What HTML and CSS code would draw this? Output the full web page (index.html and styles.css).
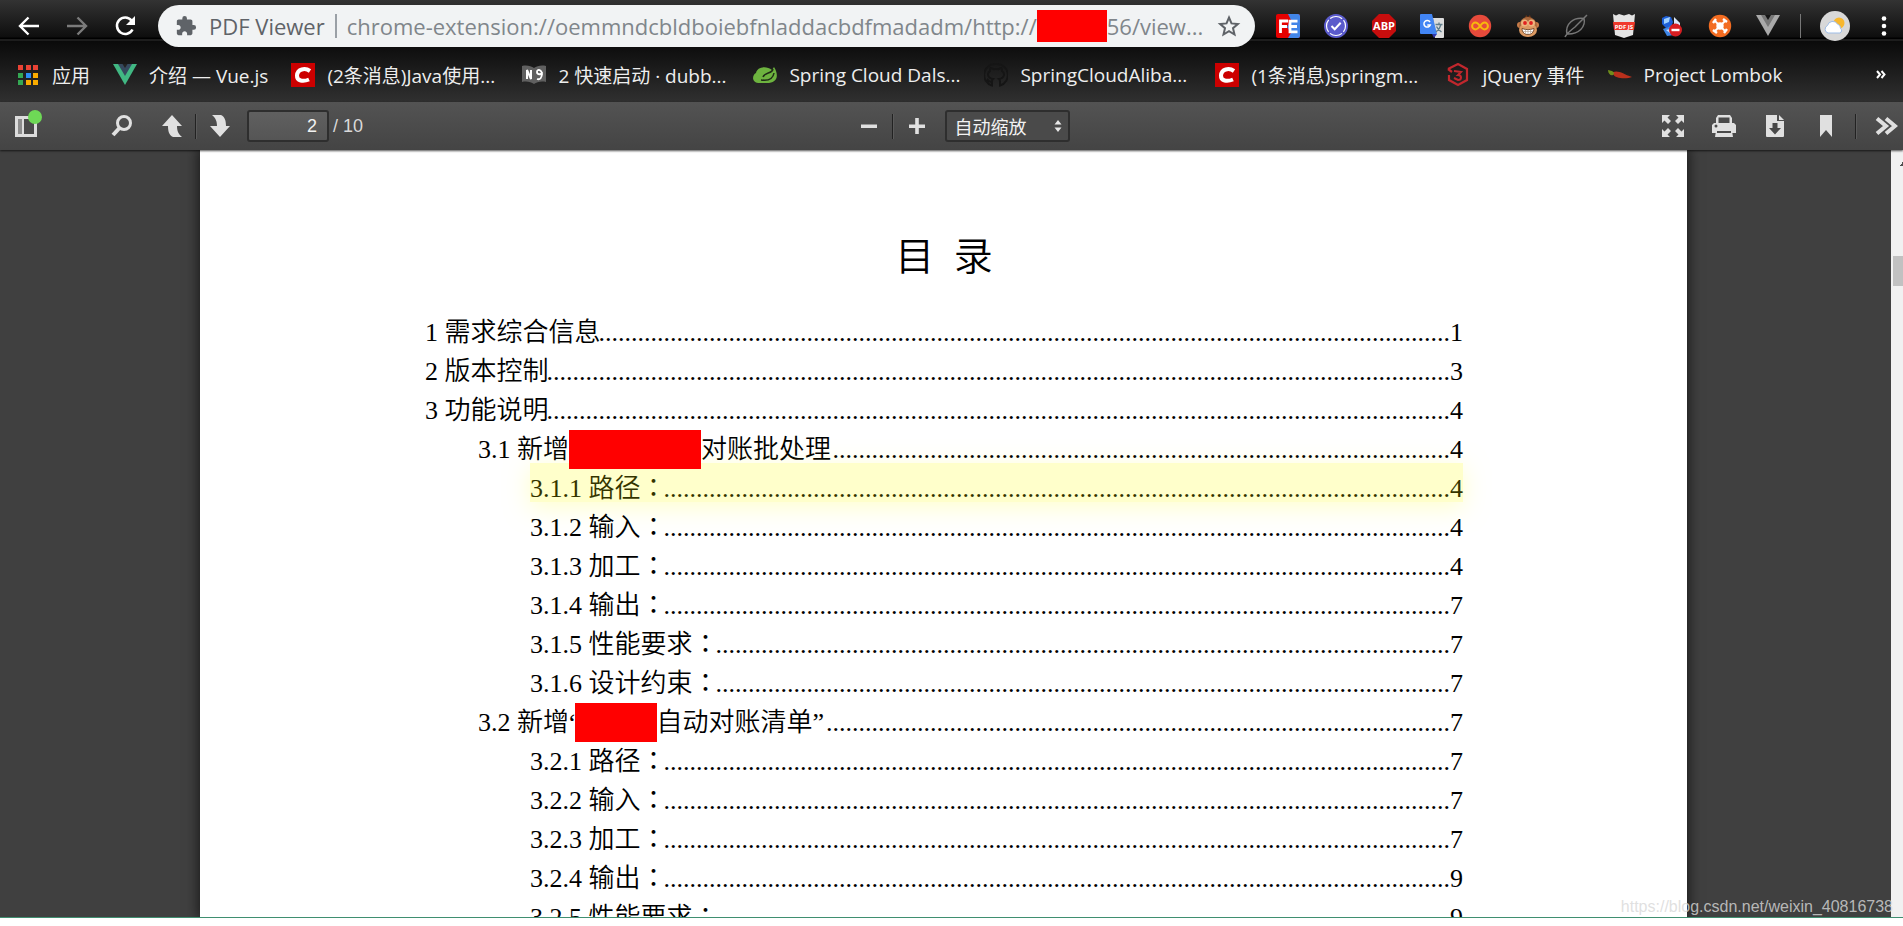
FILE: index.html
```html
<!DOCTYPE html>
<html lang="zh-CN">
<head>
<meta charset="utf-8">
<title>PDF Viewer</title>
<link rel="stylesheet" href="styles.css">
</head>
<body>
<header class="chrome-bar">
  <nav class="nav-buttons" aria-label="导航">
    <button class="icon-button" aria-label="后退"><svg width="24" height="24" viewBox="0 0 24 24" fill="none" stroke="#fff" stroke-width="2.4"><path d="M22 12H4M11.500 3.500L3 12l8.500 8.500"/></svg></button>
    <button class="icon-button" aria-label="前进"><svg width="24" height="24" viewBox="0 0 24 24" fill="none" stroke="#7b7b7b" stroke-width="2.400"><path d="M2 12h18M12.500 3.500L21 12l-8.500 8.500"/></svg></button>
    <button class="icon-button" aria-label="重新加载"><svg width="24" height="24" viewBox="0 0 24 24" fill="none" stroke="#fff" stroke-width="2.600"><path d="M19.500 15.500A8.200 8.200 0 1 1 18.500 6.500"/><path fill="#fff" stroke="none" d="M22 2v9h-9z"/></svg></button>
  </nav>
  <div class="address">
    <svg width="22" height="22" viewBox="0 0 24 24" fill="#5f6368"><path d="M20.500 11H19V7c0-1.100-.9-2-2-2h-4V3.500a2.500 2.500 0 0 0-5 0V5H4c-1.100 0-2 .9-2 2v3.800h1.500c1.500 0 2.700 1.200 2.700 2.700S5 16.200 3.500 16.200H2V20c0 1.100.9 2 2 2h3.800v-1.500c0-1.500 1.200-2.700 2.700-2.700s2.700 1.200 2.700 2.700V22H17c1.100 0 2-.9 2-2v-4h1.500a2.500 2.500 0 0 0 0-5z"/></svg>
    <span class="site-name">PDF Viewer</span>
    <span class="address-rule"></span>
    <span class="url">chrome-extension://oemmndcbldboiebfnladdacbdfmadadm/http://<i class="redact redact-url"></i>56/view...</span>
    <button class="icon-button star" aria-label="收藏"><svg width="24" height="24" viewBox="0 0 24 24" fill="none" stroke="#5f6368" stroke-width="2"><path d="M12 3.500l2.500 5.900 6.400.6-4.900 4.200 1.500 6.300-5.500-3.400-5.500 3.400L8 14.200 3.100 10l6.400-.6z"/></svg></button>
  </div>
  <div class="extensions">
    <svg viewBox="0 0 24 24"><rect width="24" height="24" rx="2" fill="#e60000"/><path d="M12 0h10a2 2 0 0 1 2 2v20a2 2 0 0 1-2 2H12l3-5-4-6 4-7z" fill="#4285e8"/><path d="M4.500 19V7H12M4.500 12.500H11M21.500 7.200H14v10.600h7.500M14 12.500h7" fill="none" stroke="#fff" stroke-width="2.800"/></svg>
    <svg viewBox="0 0 24 24"><circle cx="12" cy="12" r="12" fill="#5a5acb"/><circle cx="12" cy="12" r="9.500" fill="none" stroke="#fff" stroke-width="1.200" stroke-dasharray="12.900 2" stroke-dashoffset="6.500"/><path d="M7.500 12l3.200 3.200 6-6.400" fill="none" stroke="#fff" stroke-width="2"/></svg>
    <svg viewBox="0 0 24 24"><path d="M7 0h10l7 7v10l-7 7H7l-7-7V7z" fill="#c70d0d"/><text x="12" y="16" class="abp">ABP</text></svg>
    <svg viewBox="0 0 24 24"><path d="M13 4h10a1 1 0 0 1 1 1v18a1 1 0 0 1-1 1h-8z" fill="#dcdcdc"/><path d="M12 20h5l-3 4z" fill="#3038b0"/><path d="M1 0h11l5 20H1a1 1 0 0 1-1-1V1a1 1 0 0 1 1-1z" fill="#4285f4"/><path d="M10 8A3.300 3.300 0 1 0 10.300 11H7.300" fill="none" stroke="#fff" stroke-width="1.500"/><path d="M15.500 10.500h7M19 8.500v2M21 10.500c-1 4-3 6-5 7.500M16.500 12.500c1 2.500 3 4 5 5.500" fill="none" stroke="#607d8b" stroke-width="1.300"/></svg>
    <svg viewBox="0 0 24 24"><circle cx="12" cy="12" r="11.200" fill="#e64a3b"/><path d="M12 12c-1.500-2-2.700-3.400-4.500-3.400a3.400 3.400 0 0 0 0 6.800c1.800 0 3-1.400 4.500-3.400s2.700-3.400 4.500-3.400a3.400 3.400 0 0 1 0 6.800c-1.800 0-3-1.400-4.500-3.400z" fill="none" stroke="#f8b90c" stroke-width="2"/></svg>
    <svg viewBox="0 0 24 24"><path d="M9 4l1-3 2 2 2-2 1 3z" fill="#6b3517"/><circle cx="4" cy="11" r="3" fill="#c77b48"/><circle cx="20" cy="11" r="3" fill="#c77b48"/><circle cx="12" cy="12" r="9" fill="#a9683c"/><ellipse cx="12" cy="16" rx="9" ry="7" fill="#dc9a63"/><circle cx="8.500" cy="9" r="3.500" fill="#edb57e"/><circle cx="15.500" cy="9" r="3.500" fill="#edb57e"/><circle cx="9" cy="9" r="1.900" fill="#e02020"/><circle cx="15" cy="9" r="1.900" fill="#e02020"/><path d="M6 14.500c4 1.500 8 1.500 12 0 0 3.500-2.500 6-6 6s-6-2.500-6-6z" fill="#fff" stroke="#603010" stroke-width=".8"/><path d="M7 17.500h10M9.500 15.500v4.500M12 15.500v5M14.500 15.500v4.500" stroke="#b9a89a" stroke-width=".7"/></svg>
    <svg viewBox="0 0 24 24" fill="none" stroke="#777" stroke-width="1.500"><path d="M1 23C3 19 7 16 11 13L23 1M3 20C1 10 9 3 20 4.500c2 8-5 16-17 15.500z"/></svg>
    <svg viewBox="0 0 24 24"><path d="M1 0l3 1.500L7 0l5 1.500L17 0l3 1.500L23 0l-2 21-9 3-9-3z" fill="#e3e3e3"/><path d="M1 8h22l-1 8H2z" fill="#f0382b"/><text x="12" y="15" class="pdfjs">PDF JS</text></svg>
    <svg viewBox="0 0 24 24"><path d="M2 4l4-2 5 1 2 5-2 5-5 1-4-4z" fill="#1d5fd8"/><path d="M4 5l6-2-1 5-5 2z" fill="#9fd0ff"/><path d="M14 3l6 6v4l-6-2z" fill="#d7e8fa"/><path d="M3 15l8-3 3 9-7 1z" fill="#3f87e8"/><path d="M6 16l4-1v4z" fill="#bfe0ff"/><circle cx="15.500" cy="16" r="6.500" fill="#d81e22"/><path d="M11.500 16h8" stroke="#fff" stroke-width="2.400"/></svg>
    <svg viewBox="0 0 24 24"><circle cx="12" cy="12" r="11.200" fill="#f36c21"/><circle cx="12" cy="12" r="3.700" fill="#fff"/><path d="M7 7l10 10M17 7L7 17" stroke="#fff" stroke-width="1.800"/><path d="M5 9l3-4M15 5l4 3M19 15l-3 4M9 19l-4-3" stroke="#fff" stroke-width="2.400"/></svg>
    <svg viewBox="0 0 24 24"><path d="M0 1h24L12 22z" fill="#a9a9a9"/><path d="M5 1h5l2 4 2-4h5l-7 12z" fill="#777"/><path d="M9 1h6l-3 5z" fill="#151515"/></svg>
  </div>
  <span class="chrome-rule"></span>
  <button class="avatar" aria-label="用户"><svg width="30" height="30" viewBox="0 0 30 30"><circle cx="15" cy="15" r="15" fill="#d8d8d8"/><circle cx="19" cy="12" r="5.500" fill="#f8b72d"/><path d="M8 22a4 4 0 0 1-.5-7.500 5.500 5.500 0 0 1 10-1.500 4.500 4.500 0 0 1 3 4.500A2.600 2.600 0 0 1 20 22z" fill="#fff" stroke="#9dbce6"/></svg></button>
  <button class="icon-button menu" aria-label="菜单"><svg width="6" height="22" viewBox="0 0 6 22" fill="#fff"><circle cx="3" cy="3.500" r="2.300"/><circle cx="3" cy="11" r="2.300"/><circle cx="3" cy="18.500" r="2.300"/></svg></button>
</header>

<nav class="bookmarks" aria-label="书签">
  <a class="bookmark" href="#"><svg width="24" height="24" viewBox="0 0 24 24"><path d="M2 2h5v5H2zM10 2h5v5h-5zM17 2h5v5h-5z" fill="#ea4335"/><path d="M2 10h5v5H2zM2 17h5v5H2z" fill="#34a853"/><path d="M10 10h5v5h-5z" fill="#2b8df5"/><path d="M17 10h5v5h-5zM10 17h5v5h-5zM17 17h5v5h-5z" fill="#f9ab00"/></svg><span>应用</span></a>
  <a class="bookmark" href="#"><svg width="24" height="24" viewBox="0 0 24 24"><path d="M0 1h24L12 22z" fill="#41b883"/><path d="M5 1h14l-7 12z" fill="#35495e"/><path d="M9.500 1h5L12 5z" fill="#222"/></svg><span>介绍 — Vue.js</span></a>
  <a class="bookmark clipped" href="#"><svg width="24" height="24" viewBox="0 0 24 24"><path fill="#c00" d="M0 0h24v24H0z"/><path d="M19 8C14 4.500 6.500 6 6 12.500c-.3 5.500 6 6.500 12 4" fill="none" stroke="#fff" stroke-width="4"/></svg><span>(2条消息)Java使用...</span></a>
  <a class="bookmark clipped" href="#"><svg width="24" height="24" viewBox="0 0 24 24"><path d="M0 3c5-1 9 0 12 2 3-2 7-3 12-2v16c-5-1-9 0-12 2-3-2-7-3-12-2z" fill="#606060"/><path d="M5 16V7l4 9V7" fill="none" stroke="#fff" stroke-width="2"/><path d="M20 12c0-6-5-6-5-3s5 3 5 0M20 10c0 5-2 7-5 6" fill="none" stroke="#fff" stroke-width="1.800"/></svg><span>2 快速启动 · dubb...</span></a>
  <a class="bookmark clipped" href="#"><svg width="24" height="24" viewBox="0 0 24 24"><path d="M21 4c6 10 2 16-7 16H7C-2 20-1 12 3 10c1-6 10-8 16-3z" fill="#6db33f"/><path d="M20 6c-1 5-8 3-10 8M8 17c7 1 12-1 13-7" fill="none" stroke="#1f2b17" stroke-width="1.500"/></svg><span>Spring Cloud Dals...</span></a>
  <a class="bookmark clipped" href="#"><svg width="24" height="24" viewBox="0 0 24 24"><path d="M12 1a11 11 0 0 0-4 21.500v-4c-4 1-4-2-5-2.500M12 1a11 11 0 0 1 4 21.500v-4c0-1-.3-2-1-2.500 6-1 6-6 3-8 0-1 0-2-.5-3-1 0-2 .5-3 1.200-2-.4-3-.4-5 0-1-.7-2-1.200-3-1.200C6 6 6 7 6 8c-3 2-3 7 3 8-.7.5-1 1.500-1 2.500" fill="none" stroke="#151515" stroke-width="2"/></svg><span>SpringCloudAliba...</span></a>
  <a class="bookmark clipped" href="#"><svg width="24" height="24" viewBox="0 0 24 24"><path fill="#c00" d="M0 0h24v24H0z"/><path d="M19 8C14 4.500 6.500 6 6 12.500c-.3 5.500 6 6.500 12 4" fill="none" stroke="#fff" stroke-width="4"/></svg><span>(1条消息)springm...</span></a>
  <a class="bookmark" href="#"><svg width="24" height="24" viewBox="0 0 24 24" fill="none" stroke="#c1272d" stroke-width="2.200"><path d="M2 6l4 3M2 6l10-5 9 5v11l-9 5-9-5v-5"/><path d="M8 8l7 1-3 3c4 0 4 5 0 5l-4-2" stroke-width="2"/></svg><span>jQuery 事件</span></a>
  <a class="bookmark" href="#"><svg width="24" height="24" viewBox="0 0 24 24"><path d="M5 9c6-2 10 2 19 5-5 2-17 2-19-3z" fill="#b9301c"/><path d="M0 7c0 4 3 6 5 5 2-1 1-3-1-4-2 0-2-1-4-1z" fill="#6f8d1b"/></svg><span>Project Lombok</span></a>
  <button class="icon-button overflow" aria-label="更多书签"><svg width="10" height="12" viewBox="0 0 10 12" fill="none" stroke="#fff" stroke-width="2"><path d="M1 2l3 3.500L1 9M5.500 2l3 3.500-3 3.500"/></svg></button>
</nav>

<div class="toolbar">
  <div class="tools tools-left">
    <button class="tool" aria-label="切换侧栏"><svg width="24" height="24" viewBox="0 0 24 24"><path d="M1 2h22v21H1z" fill="#dcdcdc"/><path d="M4 5h4v15H4z" fill="#8c8c8c"/><path d="M10 5h10v15H10z" fill="#4a4a4a"/></svg><span class="dot"></span></button>
    <button class="tool find" aria-label="查找"><svg width="24" height="24" viewBox="0 0 24 24" fill="none" stroke="#e0e0e0"><circle cx="14" cy="9" r="6.500" stroke-width="3"/><path d="M9.500 14L3 21" stroke-width="4"/></svg></button>
    <button class="tool page-step" aria-label="上一页"><svg width="24" height="24" viewBox="0 0 24 24" fill="#e0e0e0"><path d="M12 1l10 11h-5c0 4 1 8 5 11h-9c-4-2-5-6-5-11H2z"/></svg></button>
    <span class="rule"></span>
    <button class="tool" aria-label="下一页"><svg width="24" height="24" viewBox="0 0 24 24" fill="#e0e0e0"><path d="M12 23l10-11h-4c0-5-1-9-5-11H4c4 3 5 7 5 11H2z"/></svg></button>
    <label class="page-label"><input class="page-input" type="text" value="2" aria-label="页码"><span>/ 10</span></label>
  </div>
  <div class="tools tools-center">
    <button class="tool" aria-label="缩小"><svg width="24" height="24" viewBox="0 0 24 24"><path d="M4 10.500h16v3.500H4z" fill="#e0e0e0"/></svg></button>
    <span class="rule"></span>
    <button class="tool" aria-label="放大"><svg width="24" height="24" viewBox="0 0 24 24"><path d="M4 10.500h6.200V4h3.600v6.500H20v3.500h-6.200v6h-3.600v-6H4z" fill="#e0e0e0"/></svg></button>
    <div class="zoom">
      <select class="zoom-select" aria-label="缩放"><option>自动缩放</option></select>
      <svg class="zoom-arrows" width="8" height="14" viewBox="0 0 8 14" fill="#e8e8e8"><path d="M4 1l3.500 4.500h-7zM4 13L.5 8.500h7z"/></svg>
    </div>
  </div>
  <div class="tools tools-right">
    <button class="tool" aria-label="演示模式"><svg width="24" height="24" viewBox="0 0 24 24" fill="#e0e0e0"><path d="M1 1h8L6.500 3.500l3.500 3.500-3 3L3.500 6.500 1 9zM23 1v8l-2.500-2.500L17 10l-3-3 3.500-3.500L15 1zM1 23v-8l2.500 2.500L7 14l3 3-3.500 3.500L9 23zM23 23h-8l2.500-2.500L14 17l3-3 3.500 3.500L23 15z"/></svg></button>
    <button class="tool" aria-label="打印"><svg width="24" height="24" viewBox="0 0 24 24"><path d="M6 1h12l2 3v6H4V4z" fill="#e0e0e0"/><path d="M6.500 3.500h11V9h-11z" fill="#4a4a4a"/><path d="M2 9h20l2 2v8H0v-8z" fill="#e0e0e0"/><circle cx="4" cy="12" r="1.500" fill="#4a4a4a"/><path d="M4 17h16l1 6H3z" fill="#e0e0e0"/><path d="M5 17h14v2H5z" fill="#4a4a4a"/></svg></button>
    <button class="tool" aria-label="下载"><svg width="24" height="24" viewBox="0 0 24 24"><path d="M3 1h11v6h7v15a1 1 0 0 1-1 1H4a1 1 0 0 1-1-1z" fill="#e0e0e0"/><path d="M16 1l5 5h-5z" fill="#e0e0e0"/><path d="M9.500 9h5v5H18l-6 6.500L6 14h3.500z" fill="#484848"/></svg></button>
    <button class="tool" aria-label="当前视图"><svg width="24" height="24" viewBox="0 0 24 24"><path d="M6 1h12v22l-6-7-6 7z" fill="#e0e0e0"/></svg></button>
    <span class="rule"></span>
    <button class="tool" aria-label="工具"><svg width="24" height="24" viewBox="0 0 24 24" fill="none" stroke="#e0e0e0" stroke-width="4"><path d="M3 4.500l9 7.500-9 7.500M12 4.500l9 7.500-9 7.500"/></svg></button>
  </div>
</div>

<main class="viewer">
  <article class="page">
    <h1 class="page-title">目  录</h1>
    <nav class="toc" aria-label="目录">
      <a class="entry" href="#"><span>1 需求综合信息</span><span class="leader"></span><span>1</span></a>
      <a class="entry" href="#"><span>2 版本控制</span><span class="leader"></span><span>3</span></a>
      <a class="entry" href="#"><span>3 功能说明</span><span class="leader"></span><span>4</span></a>
      <a class="entry level-2" href="#"><span>3.1 新增<i class="redact redact-wide"></i>对账批处理</span><span class="leader"></span><span>4</span></a>
      <a class="entry level-3 hovered" href="#"><span>3.1.1 路径<span class="colon" lang="zh-TW">：</span></span><span class="leader"></span><span>4</span></a>
      <a class="entry level-3" href="#"><span>3.1.2 输入<span class="colon" lang="zh-TW">：</span></span><span class="leader"></span><span>4</span></a>
      <a class="entry level-3" href="#"><span>3.1.3 加工<span class="colon" lang="zh-TW">：</span></span><span class="leader"></span><span>4</span></a>
      <a class="entry level-3" href="#"><span>3.1.4 输出<span class="colon" lang="zh-TW">：</span></span><span class="leader"></span><span>7</span></a>
      <a class="entry level-3" href="#"><span>3.1.5 性能要求<span class="colon" lang="zh-TW">：</span></span><span class="leader"></span><span>7</span></a>
      <a class="entry level-3" href="#"><span>3.1.6 设计约束<span class="colon" lang="zh-TW">：</span></span><span class="leader"></span><span>7</span></a>
      <a class="entry level-2" href="#"><span>3.2 新增“<i class="redact redact-short"></i>自动对账清单”</span><span class="leader"></span><span>7</span></a>
      <a class="entry level-3" href="#"><span>3.2.1 路径<span class="colon" lang="zh-TW">：</span></span><span class="leader"></span><span>7</span></a>
      <a class="entry level-3" href="#"><span>3.2.2 输入<span class="colon" lang="zh-TW">：</span></span><span class="leader"></span><span>7</span></a>
      <a class="entry level-3" href="#"><span>3.2.3 加工<span class="colon" lang="zh-TW">：</span></span><span class="leader"></span><span>7</span></a>
      <a class="entry level-3" href="#"><span>3.2.4 输出<span class="colon" lang="zh-TW">：</span></span><span class="leader"></span><span>9</span></a>
      <a class="entry level-3" href="#"><span>3.2.5 性能要求<span class="colon" lang="zh-TW">：</span></span><span class="leader"></span><span>9</span></a>
    </nav>
  </article>
  <div class="scrollbar"><span class="scroll-arrow"></span><span class="scroll-thumb"></span></div>
  <span class="watermark">https://blog.csdn.net/weixin_40816738</span>
</main>
<footer class="window-edge"></footer>
<script src="toc.js"></script>
</body>
</html>
```
FILE: styles.css
```css
* { box-sizing: border-box; }

body {
  margin: 0;
  height: 100vh;
  display: flex;
  flex-direction: column;
  overflow: hidden;
  background: #fff;
  font-family: "Open Sans", "Noto Sans CJK SC", sans-serif;
}

svg { display: block; flex: none; }
a { color: inherit; text-decoration: none; }

button {
  padding: 0;
  border: 0;
  background: none;
}

.icon-button { flex: none; }

/* Browser bar */
.chrome-bar {
  flex: none;
  position: relative;
  z-index: 1;
  display: flex;
  align-items: center;
  height: 41px;
  padding: 12px 16px 0 17px;
  border-bottom: 2px solid #1d1d1d;
  background: linear-gradient(#333, #0e0e0e 37px, #000 38px);
}

.nav-buttons { display: flex; gap: 24px; }

.address {
  flex: 1;
  display: flex;
  align-items: center;
  height: 42px;
  margin-left: 21px;
  padding: 0 14px 0 17px;
  border-radius: 21px;
  background: #f1f3f4;
  color: #80868b;
  font-size: 22px;
  white-space: nowrap;
}

.site-name { margin-left: 12px; color: #5f6368; }

.address-rule {
  width: 2px;
  height: 24px;
  margin: 0 10px;
  background: #9aa0a6;
}

.url { display: flex; align-items: center; }
.star { margin-left: auto; }

.redact {
  display: inline-block;
  background: #f00;
}

.redact-url { width: 70px; height: 32px; }

.extensions { display: flex; gap: 24px; margin-left: 21px; }
.extensions svg { width: 24px; height: 24px; }

.abp {
  fill: #fff;
  font: bold 11px "Open Sans", sans-serif;
  text-anchor: middle;
}

.pdfjs {
  fill: #fff;
  font: bold 6px "Open Sans", sans-serif;
  text-anchor: middle;
}

.chrome-rule {
  width: 1px;
  height: 24px;
  margin: 0 19px 0 20px;
  background: #777;
}

.avatar { flex: none; margin-right: 31px; }

/* Bookmarks */
.bookmarks {
  flex: none;
  display: flex;
  align-items: center;
  gap: 23px;
  height: 61px;
  padding: 7px 17px 0 16px;
  background: linear-gradient(#0a0a0a, #303030);
  color: #eee;
  font-size: 19px;
}

.bookmark {
  flex: none;
  display: flex;
  align-items: center;
  gap: 12px;
  white-space: nowrap;
}

.clipped { width: 208px; }
.overflow { margin-left: auto; }

/* Viewer toolbar */
.toolbar {
  flex: none;
  position: relative;
  display: grid;
  grid-template-columns: 1fr auto 1fr;
  align-items: center;
  height: 48px;
  padding: 0 5px 0 14px;
  background: linear-gradient(#535353, #444);
  box-shadow: 0 1px 2px #000a;
  z-index: 1;
}

.tools { display: flex; align-items: center; }
.tool { position: relative; flex: none; }

.dot {
  position: absolute;
  top: -4px;
  right: -4px;
  width: 14px;
  height: 14px;
  border-radius: 50%;
  background: #6ed956;
}

.find { margin-left: 72px; }
.page-step { margin-left: 26px; }

.rule {
  width: 2px;
  height: 25px;
  margin: 0 11px;
  border-left: 1px solid #222;
  border-right: 1px solid #5a5a5a;
}

.page-label {
  display: flex;
  align-items: center;
  gap: 4px;
  margin-left: 15px;
  color: #d9d9d9;
  font: 18px "Liberation Sans", sans-serif;
}

.page-input {
  width: 82px;
  height: 32px;
  padding: 0 10px;
  border: 2px solid #2e2e2e;
  border-radius: 3px;
  background: linear-gradient(#606060, #555);
  color: #f2f2f2;
  font: 18px "Liberation Sans", sans-serif;
  text-align: right;
}

.tools-center { margin-left: 14px; }
.zoom { position: relative; margin-left: 16px; }

.zoom-select {
  appearance: none;
  display: block;
  width: 125px;
  height: 32px;
  padding: 0 8px;
  border: 2px solid #2e2e2e;
  border-radius: 3px;
  background: #4a4a4a;
  color: #f2f2f2;
  font: 18px "Noto Sans CJK SC", sans-serif;
}

.zoom-arrows { position: absolute; top: 9px; right: 8px; }
.tools-right { justify-content: flex-end; gap: 27px; }
.tools-right .rule { margin: 0 -10px 0 -10px; }

/* Document */
.viewer {
  flex: 1;
  min-height: 0;
  position: relative;
  display: flex;
  overflow: hidden;
  background: #404040;
}

.page {
  flex: 1;
  min-width: 0;
  margin: 0 204px 0 200px;
  padding: 69px 224px 0 225px;
  background: #fff;
  box-shadow: 0 0 12px 2px #0009;
  color: #000;
  font-family: "Liberation Serif", "Noto Sans CJK SC", serif;
  font-weight: 350;
}

.page-title {
  margin: 0 0 18px;
  font-size: 39px;
  font-weight: 350;
  line-height: 76px;
  text-align: center;
  white-space: pre;
}

.entry {
  position: relative;
  display: flex;
  height: 39px;
  font-size: 26px;
  line-height: 39px;
  white-space: nowrap;
}

.leader {
  flex: 1;
  min-width: 0;
  display: flex;
  justify-content: flex-end;
}

/* Full-width colon centred in its cell; zero line height keeps the row's baseline */
.colon {
  font-family: "Noto Sans CJK TC", sans-serif;
  line-height: 0;
}

.level-2 { margin-left: 53px; }
.level-3 { margin-left: 105px; }

.hovered::after {
  content: "";
  position: absolute;
  inset: -6px 0 6px;
  background: #ff0;
  box-shadow: 0 5px 25px #ff0;
  opacity: 0.2;
}

.redact-wide,
.redact-short {
  position: relative;
  z-index: 1;
  height: 39px;
  vertical-align: top;
}

.redact-wide { width: 132px; }
.redact-short { width: 82px; margin-left: -6px; }

.scrollbar {
  flex: none;
  width: 12px;
  overflow: hidden;
  background: #f1f1f1;
}

.scroll-arrow {
  display: block;
  width: 14px;
  height: 16px;
  margin: 0 0 90px 6px;
  background: linear-gradient(135deg, #f1f1f1 60%, #505050 60%);
}

.scroll-thumb {
  display: block;
  height: 30px;
  margin-left: 2px;
  background: #c1c1c1;
}

.watermark {
  position: absolute;
  right: 10px;
  bottom: 1px;
  color: #d8d8d8cc;
  font: 16px "Liberation Sans", sans-serif;
}

.window-edge {
  flex: none;
  height: 9px;
  border-top: 1px solid #3f8f70;
}
```
FILE: toc.js
```js
// Fill each leader with dots between the title and the page number.
document.querySelectorAll('.leader').forEach((leader) => {
  const width = leader.getBoundingClientRect().width;
  const dot = parseFloat(getComputedStyle(leader).fontSize) / 4;
  leader.textContent = '.'.repeat(Math.round(width / dot));
});
```
